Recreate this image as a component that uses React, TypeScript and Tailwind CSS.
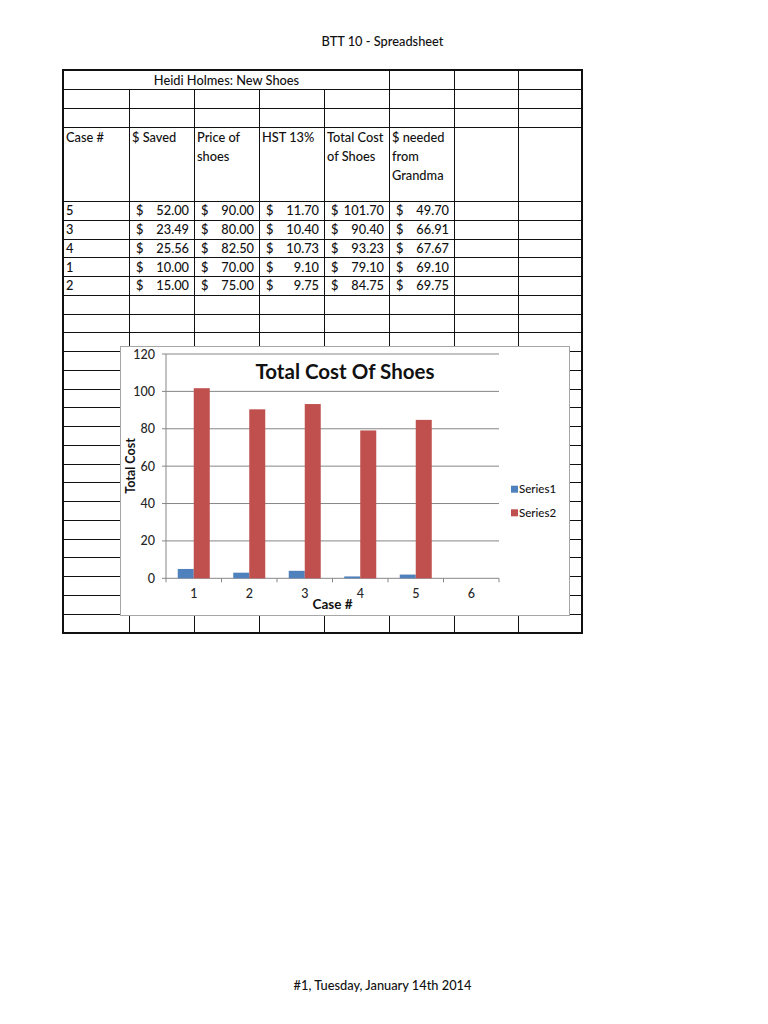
import React from "react";

const data: string[][] = [
  ["5", "52.00", "90.00", "11.70", "101.70", "49.70"],
  ["3", "23.49", "80.00", "10.40", "90.40", "66.91"],
  ["4", "25.56", "82.50", "10.73", "93.23", "67.67"],
  ["1", "10.00", "70.00", "9.10", "79.10", "69.10"],
  ["2", "15.00", "75.00", "9.75", "84.75", "69.75"],
];

const headers = ["Case #", "$ Saved", "Price of shoes", "HST 13%", "Total Cost of Shoes", "$ needed from Grandma", "", ""];

const gridCols = "grid grid-cols-[65px_65px_65px_65px_65px_65px_64px_63px]";

function Chart() {
  const left = 45;
  const right = 378;
  const top = 7;
  const bottom = 231.3;
  const scale = (bottom - top) / 120;
  const cat = (right - left) / 6;
  const s1 = [5, 3, 4, 1, 2];
  const s2 = [101.7, 90.4, 93.23, 79.1, 84.75];
  const ticks = [0, 20, 40, 60, 80, 100, 120];
  return (
    <svg width="448" height="268" viewBox="0 0 448 268" style={{ fontFamily: "Lato, 'Liberation Sans', sans-serif" }}>
      {ticks.map((t) => {
        const y = bottom - t * scale;
        return (
          <g key={t}>
            <line x1={left - 4} x2={right} y1={y} y2={y} stroke="#868686" strokeWidth="1" />
            <text x={34} y={y + 4.5} textAnchor="end" fontSize="12.5" fontWeight="500" fill="#262626">
              {t}
            </text>
          </g>
        );
      })}
      <line x1={left} x2={left} y1={top} y2={bottom} stroke="#868686" strokeWidth="1" />
      {Array.from({ length: 7 }).map((_, i) => (
        <line key={i} x1={left + i * cat} x2={left + i * cat} y1={bottom} y2={bottom + 4} stroke="#868686" strokeWidth="1" />
      ))}
      {s1.map((v, i) => {
        const c = left + cat * (i + 0.5);
        return (
          <g key={i}>
            <rect x={c - 16} y={bottom - v * scale} width={16} height={v * scale} fill="#4f81bd" />
            <rect x={c} y={bottom - s2[i] * scale} width={16} height={s2[i] * scale} fill="#c0504d" />
          </g>
        );
      })}
      {[1, 2, 3, 4, 5, 6].map((n, i) => (
        <text key={n} x={left + cat * (i + 0.5)} y={250.5} textAnchor="middle" fontSize="12.5" fontWeight="500" fill="#262626">
          {n}
        </text>
      ))}
      <text x={211.5} y={261.5} textAnchor="middle" fontSize="13.5" fontWeight="700" fill="#111">
        Case #
      </text>
      <text transform="translate(13.5,119) rotate(-90)" textAnchor="middle" fontSize="12.5" fontWeight="700" fill="#111">
        Total Cost
      </text>
      <text x={224} y={31.5} textAnchor="middle" fontSize="20.5" fontWeight="700" fill="#111">
        Total Cost Of Shoes
      </text>
      <rect x={390} y={138.7} width={7} height={7} fill="#4f81bd" />
      <text x={398} y={146} fontSize="11.5" fontWeight="500" fill="#111">
        Series1
      </text>
      <rect x={390} y={162.3} width={7} height={7} fill="#c0504d" />
      <text x={398} y={170} fontSize="11.5" fontWeight="500" fill="#111">
        Series2
      </text>
    </svg>
  );
}

function MoneyCell({ v }: { v: string }) {
  return (
    <div className="flex items-center justify-between border-l border-[#111] pl-[6px] pr-[5px]">
      <span>$</span>
      <span>{v}</span>
    </div>
  );
}

export default function App() {
  const emptyRows = 18;
  return (
    <div
      className="relative flex h-[1024px] w-[768px] flex-col bg-white text-[12.8px] font-medium text-[#111]"
      style={{ fontFamily: "Lato, 'Liberation Sans', sans-serif" }}
    >
      <div className="mt-[33px] h-[16px] text-center leading-[16px] pr-[3px]">BTT 10 - Spreadsheet</div>

      <div className="relative ml-[62px] mt-[20px] w-[521px] border-2 border-[#111]">
        {/* Row 1 */}
        <div className={`${gridCols} h-[18px]`}>
          <div className="col-span-5 flex items-center justify-center">Heidi Holmes: New Shoes</div>
          <div className="border-l border-[#111]" />
          <div className="border-l border-[#111]" />
          <div className="border-l border-[#111]" />
        </div>
        {/* Rows 2-3 */}
        {[0, 1].map((r) => (
          <div key={r} className={`${gridCols} h-[19px] border-t border-[#111]`}>
            {Array.from({ length: 8 }).map((_, i) => (
              <div key={i} className={i > 0 ? "border-l border-[#111]" : ""} />
            ))}
          </div>
        ))}
        {/* Header */}
        <div className={`${gridCols} h-[74px] border-t border-[#111] leading-[19px]`}>
          {headers.map((h, i) => (
            <div key={i} className={`${i > 0 ? "border-l border-[#111]" : ""} pl-[2px] pr-[1px]`}>
              {h}
            </div>
          ))}
        </div>
        {/* Data */}
        {data.map((row, r) => (
          <div key={r} className={`${gridCols} h-[18.75px] border-t border-[#111] leading-[17px]`}>
            <div className="flex items-center pl-[2px]">{row[0]}</div>
            {row.slice(1).map((v, i) => (
              <MoneyCell key={i} v={v} />
            ))}
            <div className="border-l border-[#111]" />
            <div className="border-l border-[#111]" />
          </div>
        ))}
        {Array.from({ length: emptyRows }).map((_, r) => (
          <div key={r} className={`${gridCols} h-[18.75px] border-t border-[#111]`}>
            {Array.from({ length: 8 }).map((_, i) => (
              <div key={i} className={i > 0 ? "border-l border-[#111]" : ""} />
            ))}
          </div>
        ))}

        <div className="absolute left-[56px] top-[275px] h-[270px] w-[450px] border border-[#a6a6a6] bg-white">
          <Chart />
        </div>
      </div>

      <div className="mt-auto mb-[31px] text-center leading-[16px] pr-[3px]">#1, Tuesday, January 14th 2014</div>
    </div>
  );
}
